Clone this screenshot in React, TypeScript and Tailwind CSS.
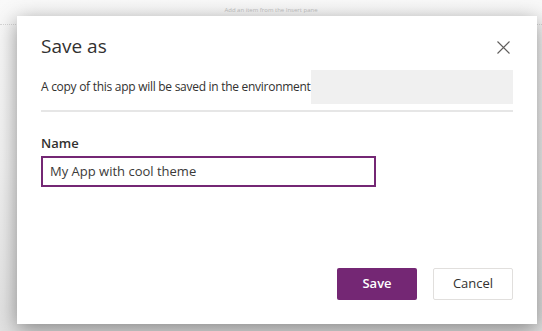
import React from "react";

export default function App() {
  const font = { fontFamily: '"Open Sans", "Noto Sans", sans-serif' };
  return (
    <div
      className="relative w-[542px] h-[331px] overflow-hidden bg-[#ececec]"
      style={font}
    >
      {/* background canvas behind the dialog */}
      <div className="absolute inset-0 bg-gradient-to-b from-[#f9f9f9] via-[#f1f1f1] to-[#e2e2e2]">
        <div className="absolute left-0 right-0 top-[24px] border-t border-dotted border-[#d6d6d6]" />
        <div className="absolute left-0 right-0 top-[5px] text-center text-[6px] leading-[10px] text-[#c4c4c4]">
          Add an item from the Insert pane
        </div>
      </div>

      <div className="relative pt-[16px] pl-[17px]">
        <div className="w-[520px] h-[308px] bg-white shadow-[0_5px_20px_rgba(0,0,0,0.42)] flex flex-col px-[24px]">
          <div className="flex items-center justify-between pt-[16px] h-[44px]">
            <div className="text-[19px] leading-[28px] text-[#323130]">Save as</div>
            <svg width="13" height="13" viewBox="0 0 13 13" className="mr-[3px] mt-[2px]">
              <path d="M0.5 0.5 L12.5 12.5 M12.5 0.5 L0.5 12.5" stroke="#605e5c" strokeWidth="1.1" fill="none" />
            </svg>
          </div>
          <div className="mt-[10px] flex items-center h-[34px]">
            <span className="text-[12px] tracking-[-0.28px] leading-[20px] text-[#323130] whitespace-nowrap">
              A copy of this app will be saved in the environment
            </span>
            <div className="h-[34px] w-[204px] bg-[#f0f0f0]" />
          </div>
          <div className="mt-[6px] h-[2px] w-[472px] bg-[#e6e6e6]" />
          <div className="mt-[21px] text-[13px] leading-[20px] font-semibold text-[#323130]">Name</div>
          <div className="mt-[3px] w-[335px] h-[31px] border-2 border-[#742774] flex items-center pl-[7px] text-[13px] text-[#3b3a39]">
            My App with cool theme
          </div>
          <div className="mt-auto mb-[24px] flex justify-end gap-[16px]">
            <button className="w-[80px] h-[32px] rounded-[2px] bg-[#742774] text-white text-[13px] font-semibold">
              Save
            </button>
            <button className="w-[80px] h-[32px] rounded-[2px] bg-white border border-[#e1dfdd] text-[#323130] text-[13px]">
              Cancel
            </button>
          </div>
        </div>
      </div>
    </div>
  );
}
